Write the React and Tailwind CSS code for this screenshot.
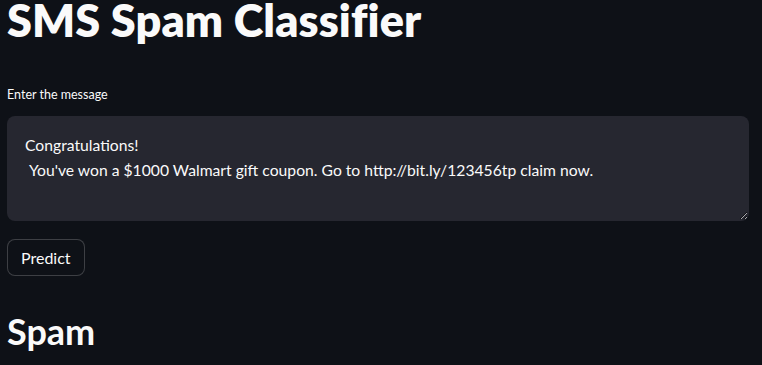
export default function App() {
  const message = "Congratulations!\n You've won a $1000 Walmart gift coupon. Go to http://bit.ly/123456tp claim now.";

  return (
    <div
      className="min-h-screen w-full overflow-hidden bg-[#0e1117] text-[#fafafa]"
      style={{ fontFamily: '"Lato", "Noto Sans", sans-serif' }}
    >
      <div className="px-[7px]">
        <h1 className="text-[45px] font-extrabold leading-[40px] tracking-[0.1px]">
          SMS Spam Classifier
        </h1>

        <label className="mt-[47px] block text-[12.5px] leading-[16px]">Enter the message</label>

        <div className="mt-[13px] w-[742px]">
          <textarea
            defaultValue={message}
            className="block h-[105px] w-full resize-y rounded-lg border border-transparent bg-[#262730] px-[17px] py-[16px] text-[15.7px] leading-[25px] text-[#fafafa] outline-none"
          />
        </div>

        <button className="mt-[18px] h-[37px] rounded-lg border border-[rgba(250,250,250,0.2)] bg-[#0e1117] px-[13px] text-[16px] text-[#fafafa]">
          Predict
        </button>

        <h2 className="mt-[34px] text-[36px] font-bold leading-[1.2]">Spam</h2>
      </div>
    </div>
  );
}
